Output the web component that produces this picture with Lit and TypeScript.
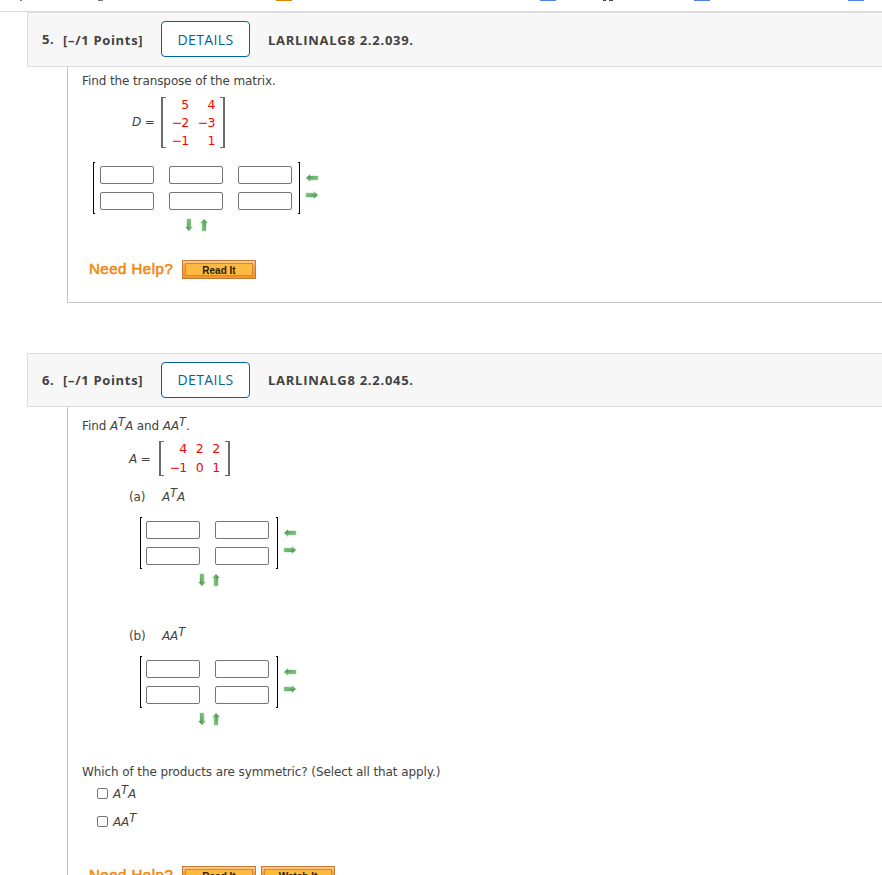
import { LitElement, html, svg, css, TemplateResult } from "lit";
import { customElement, property } from "lit/decorators.js";

const ARROW_ANGLES: Record<string, number> = { left: 180, right: 0, down: 90, up: -90 };

/** Small green block arrow used to add or remove matrix rows and columns. */
@customElement("size-arrow")
class SizeArrow extends LitElement {
  @property() dir = "right";
  static styles = css`
    :host { display: block; width: 14px; height: 14px; }
    svg { display: block; }
  `;
  render() {
    return html`<svg width="14" height="14" viewBox="0 0 14 14">
      <defs>
        <linearGradient id="g" x1="0" y1="0" x2="0.6" y2="1">
          <stop offset="0" stop-color="#8ccc8c"></stop>
          <stop offset="0.5" stop-color="#74bb74"></stop>
          <stop offset="1" stop-color="#3f8a45"></stop>
        </linearGradient>
      </defs>
      ${svg`<g transform="rotate(${ARROW_ANGLES[this.dir]} 7 7)">
        <path d="M1 5H9V3.5L13 7L9 10.5V9H1Z" fill="url(#g)" stroke="#94c894" stroke-width="0.5"/>
      </g>`}
    </svg>`;
  }
}

/** Grid of answer boxes between square brackets, with its resize arrows. */
@customElement("matrix-input")
class MatrixInput extends LitElement {
  @property({ type: Number }) rows = 2;
  @property({ type: Number }) cols = 2;
  @property({ type: Boolean }) wide = false;
  static styles = css`
    :host { display: grid; grid-template-columns: max-content max-content; column-gap: 5px; width: max-content; }
    .frame { display: flex; height: 52px; }
    .bracket { width: 2px; box-sizing: border-box; border: 1px solid #000; }
    .bracket.open { border-right: 0; }
    .bracket.close { border-left: 0; }
    .cells { display: grid; column-gap: 15px; row-gap: 8px; padding: 4px 7px 4px 4px; }
    .cells.wide { padding: 4px 6px 4px 5px; }
    input { box-sizing: border-box; width: 54px; height: 18px; margin: 0; padding: 1px 2px; border: 1px solid #767676; border-radius: 2px; background: #fff; }
    .side { display: flex; flex-direction: column; gap: 2.5px; padding-top: 9px; }
    .below { display: flex; gap: 0.5px; justify-content: center; padding-top: 4px; }
  `;
  render() {
    const count = this.rows * this.cols;
    return html`
      <div class="frame">
        <span class="bracket open"></span>
        <div class="cells ${this.wide ? "wide" : ""}" style="grid-template-columns: repeat(${this.cols}, 54px)">
          ${Array.from({ length: count }, () => html`<input type="text" />`)}
        </div>
        <span class="bracket close"></span>
      </div>
      <div class="side"><size-arrow dir="left"></size-arrow><size-arrow dir="right"></size-arrow></div>
      <div class="below"><size-arrow dir="down"></size-arrow><size-arrow dir="up"></size-arrow></div>
    `;
  }
}

/** Read-only matrix with red entries. */
@customElement("matrix-view")
class MatrixView extends LitElement {
  @property({ attribute: false }) values: string[][] = [];
  @property({ type: Number }) rowHeight = 18;
  static styles = css`
    :host { display: flex; color: #f00; font-size: 12.5px; }
    .bracket { width: 5px; box-sizing: border-box; border: 1px solid #6b6b6b; }
    .open { border-right: 0; border-left-width: 2px; }
    .close { border-left: 0; border-right-width: 2px; }
    table { border-collapse: collapse; margin: var(--table-offset, -1px) 0 0; }
    td { padding: 0 0 0 9.3px; text-align: right; letter-spacing: -0.8px; white-space: nowrap; }
    td:first-child { padding-left: 5.7px; }
    td:last-child { padding-right: 5.4px; }
  `;
  render() {
    return html`<span class="bracket open"></span>
      <table>
        ${this.values.map(
          (r) => html`<tr style="height:${this.rowHeight}px;line-height:${this.rowHeight}px">${r.map((v) => html`<td>${v}</td>`)}</tr>`
        )}
      </table>
      <span class="bracket close"></span>`;
  }
}

@customElement("need-help")
class NeedHelp extends LitElement {
  @property({ attribute: false }) actions: string[] = [];
  static styles = css`
    :host { display: flex; align-items: center; height: 19px; font-family: "Liberation Sans", Arial, sans-serif; font-weight: bold; }
    .label { width: 93px; font-size: 15px; font-weight: 400; line-height: 17px; padding-bottom: 2px; letter-spacing: 0.5px;
      color: #f08a10; -webkit-text-stroke: 0.6px #f08a10; white-space: nowrap; }
    button { box-sizing: border-box; width: 74px; height: 19px; margin: 0 5px 0 0; padding: 0; border: 1px solid #c27a35;
      background: linear-gradient(#fbcf97, #f7a44a 30%, #f5922d); font: inherit; display: flex; align-items: center; justify-content: center; }
    span { box-sizing: border-box; width: 68px; height: 13px; border: 1px solid #d08a35; background: #fdb940; font-size: 10px; line-height: 13px; color: #2a1c08; text-align: center; }
  `;
  render() {
    return html`<div class="label">Need Help?</div>
      ${this.actions.map((a) => html`<button><span>${a}</span></button>`)}`;
  }
}

@customElement("question-header")
class QuestionHeader extends LitElement {
  @property() number = "";
  @property() code = "";
  static styles = css`
    :host { display: flex; align-items: center; box-sizing: border-box; height: 54px; margin-left: 27px; padding-left: 14px;
      border: 1px solid #ddd; border-right: 0; background: #f7f7f7; color: #424242;
      font: 700 13px/18px "Open Sans", sans-serif; white-space: nowrap; letter-spacing: 0.73px; }
    .number { width: 21px; font-family: "Noto Sans", sans-serif; letter-spacing: 0.5px; padding-bottom: 1px; }
    .points { width: 98px; letter-spacing: 0.68px; }
    .points, .code { padding: var(--label-padding, 0 0 1px); }
    button { box-sizing: border-box; width: 89px; height: 36px; margin: 0 18px 0 0; padding: var(--button-padding, 0); border: 1px solid #00639a;
      border-radius: 4px; background: #fff; color: #00639a; font: 400 14px/18px "Open Sans", sans-serif; letter-spacing: 0.4px; }
  `;
  render() {
    return html`<span class="number">${this.number}.</span><span class="points">[–/1 Points]</span>
      <button>DETAILS</button><span class="code">${this.code}</span>`;
  }
}

const ata: TemplateResult = html`<i>A<sup>T</sup>A</i>`;
const aat: TemplateResult = html`<i>AA<sup>T</sup></i>`;

@customElement("app-root")
class AppRoot extends LitElement {
  static styles = css`
    :host { display: block; height: 875px; overflow: hidden; background: #fff; color: #424242;
      font: 12px/18px "DejaVu Sans", Verdana, sans-serif; letter-spacing: -0.1px; white-space: nowrap; }
    .toolbar { box-sizing: border-box; height: 12px; border-bottom: 1px solid #ddd; }
    .toolbar svg { display: block; }
    .first { height: 55px; padding-bottom: 1px; --label-padding: 1px 0 0; --button-padding: 2px 0 0; }
    .body { box-sizing: border-box; margin-left: 67px; padding-left: 14px; border-left: 1px solid #c4c4c4; }
    .body.one { height: 236px; border-bottom: 1px solid #c4c4c4; margin-bottom: 50px; padding-top: 5px; }
    .body.two { height: 480px; padding-top: 10px; }
    sup { font-size: 11.5px; line-height: 0; vertical-align: 4px; }
    .eq { display: flex; align-items: center; }
    .eq .name { flex: none; }
    .eq.d { height: 51px; margin: 7px 0 0 50px; }
    .eq.d .name { width: 29px; padding-bottom: 2px; }
    .eq.d matrix-view { height: 51px; }
    .eq.a { height: 35px; margin: 6px 0 0 47px; --table-offset: -2px; }
    .eq.a .name { width: 30px; }
    .eq.a matrix-view { height: 35px; }
    .input-d { margin: 14px 0 0 11px; }
    .input-p { margin: 11px 0 0 58px; }
    .help { margin-left: 7px; }
    .help.h1 { margin-top: 28px; }
    .part { display: flex; height: 18px; margin-left: 47px; }
    .part span { width: 33px; }
    .pa { margin-top: 12px; }
    .pb { margin-top: 40px; }
    .which { margin-top: 37px; }
    .choice { display: flex; align-items: center; gap: 5px; height: 18px; margin: 4px 0 0 15px; }
    .choice + .choice { margin-top: 10px; }
    .choice input { appearance: none; box-sizing: border-box; width: 11px; height: 11px; margin: 0 0 1px; border: 1px solid #767676; border-radius: 2px; background: #fff; }
    .help.h2 { margin-top: 35px; }
  `;
  render() {
    return html`
      <div class="toolbar">
        <svg width="882" height="3">
          <path d="M20 0h2v1h-2zM98 0h5v1h-5z" fill="#777"></path>
          <path d="M276 0h16v1h-16z" fill="#e08600"></path>
          <path d="M540 0h16v1h-16zM694 0h16v1h-16zM848 0h16v1h-16z" fill="#4f7fe8"></path>
          <path d="M603 0h3v1h-3zM609 0h4v1h-4z" fill="#444"></path>
        </svg>
      </div>
      <question-header class="first" number="5" code="LARLINALG8 2.2.039."></question-header>
      <div class="body one">
        <div class="prompt">Find the transpose of the matrix.</div>
        <div class="eq d"><span class="name"><i>D</i> =</span>
          <matrix-view .values=${[["5", "4"], ["−2", "−3"], ["−1", "1"]]} .rowHeight=${18}></matrix-view></div>
        <matrix-input class="input-d" cols="3" wide></matrix-input>
        <need-help class="help h1" .actions=${["Read It"]}></need-help>
      </div>
      <question-header number="6" code="LARLINALG8 2.2.045."></question-header>
      <div class="body two">
        <div class="find">Find ${ata} and ${aat}.</div>
        <div class="eq a"><span class="name"><i>A</i> =</span>
          <matrix-view .values=${[["4", "2", "2"], ["−1", "0", "1"]]} .rowHeight=${19}></matrix-view></div>
        <div class="part pa"><span>(a)</span>${ata}</div>
        <matrix-input class="input-p"></matrix-input>
        <div class="part pb"><span>(b)</span>${aat}</div>
        <matrix-input class="input-p"></matrix-input>
        <div class="which">Which of the products are symmetric? (Select all that apply.)</div>
        <label class="choice"><input type="checkbox" />${ata}</label>
        <label class="choice"><input type="checkbox" />${aat}</label>
        <need-help class="help h2" .actions=${["Read It", "Watch It"]}></need-help>
      </div>
    `;
  }
}
